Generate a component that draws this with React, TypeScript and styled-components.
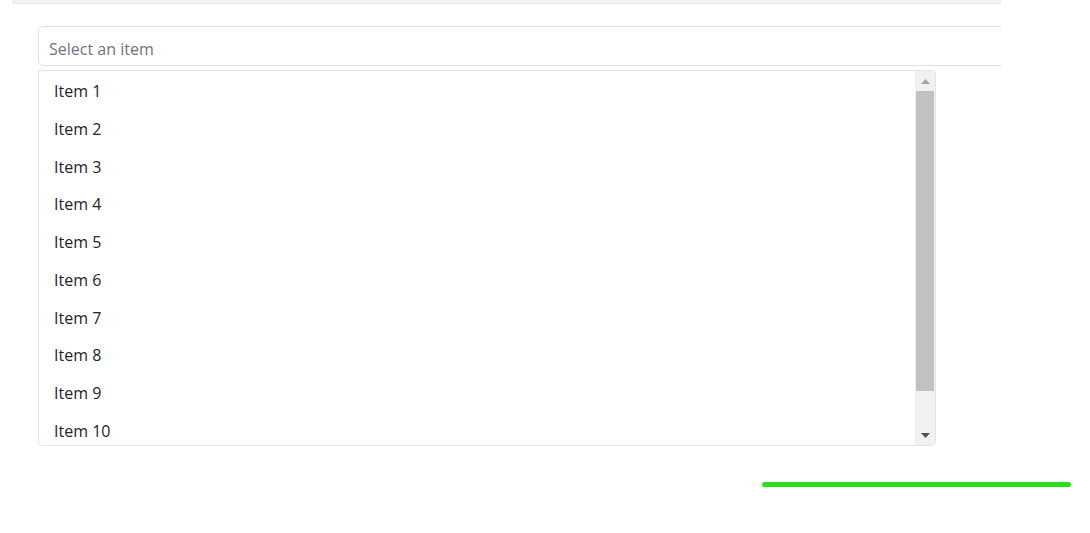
import styled, { createGlobalStyle } from 'styled-components'

const GlobalStyle = createGlobalStyle`
  html, body {
    margin: 0;
    padding: 0;
    background: #fff;
  }
  body {
    font-family: "Open Sans", "Liberation Sans", sans-serif;
    color: #212529;
  }
`

const items = Array.from({ length: 10 }, (_, i) => `Item ${i + 1}`)

export default function App() {
  return (
    <>
      <GlobalStyle />
      <Page>
        <Panel>
          <TopBar />
          <Body>
            <SelectInput placeholder="Select an item" readOnly />
            <ListBox>
              <List>
                {items.map(item => (
                  <Option key={item}>{item}</Option>
                ))}
              </List>
              <ScrollBar>
                <Arrow>
                  <svg width="9" height="5" viewBox="0 0 9 5">
                    <path d="M0 5 L4.5 0 L9 5 Z" fill="#a3a3a3" />
                  </svg>
                </Arrow>
                <Track>
                  <Thumb />
                </Track>
                <Arrow>
                  <svg width="9" height="5" viewBox="0 0 9 5">
                    <path d="M0 0 L9 0 L4.5 5 Z" fill="#505050" />
                  </svg>
                </Arrow>
              </ScrollBar>
            </ListBox>
          </Body>
        </Panel>
        <GreenRow>
          <GreenLine />
        </GreenRow>
      </Page>
    </>
  )
}

const Page = styled.div`
  width: 1090px;
  height: 533px;
  overflow: hidden;
`
const Panel = styled.div`
  margin-left: 12px;
  width: 989px;
  overflow: hidden;
`
const TopBar = styled.div`
  height: 3px;
  background: #f3f3f3;
  border-bottom: 1px solid #e9e9e9;
`
const Body = styled.div`
  padding: 22px 0 0 26px;
`
const SelectInput = styled.input`
  display: block;
  box-sizing: border-box;
  width: 1000px;
  height: 40px;
  padding: 9px 10px 3px;
  border: 1px solid #dee2e6;
  border-radius: 5px;
  font-family: "Open Sans", "Liberation Sans", sans-serif;
  font-size: 16px;
  color: #212529;
  outline: none;
  &::placeholder {
    color: #6c757d;
  }
`
const ListBox = styled.div`
  display: flex;
  box-sizing: border-box;
  margin-top: 4px;
  width: 898px;
  height: 376px;
  border: 1px solid #e4e4e4;
  border-radius: 0 4px 4px 4px;
  overflow: hidden;
`
const List = styled.div`
  flex: 1;
  overflow: hidden;
  padding-top: 2px;
`
const Option = styled.div`
  height: 37.75px;
  line-height: 37.75px;
  padding-left: 15px;
  font-size: 16px;
  color: #212529;
`
const ScrollBar = styled.div`
  width: 20px;
  display: flex;
  flex-direction: column;
  background: #f1f1f1;
`
const Arrow = styled.div`
  height: 20px;
  display: flex;
  align-items: center;
  justify-content: center;
`
const Track = styled.div`
  flex: 1;
  padding: 0 1px 0 1px;
`
const Thumb = styled.div`
  height: 300px;
  background: #c1c1c1;
`
const GreenRow = styled.div`
  padding: 36px 0 0 762px;
`
const GreenLine = styled.div`
  width: 309px;
  height: 5px;
  border-radius: 3px;
  background: #28e01a;
`
